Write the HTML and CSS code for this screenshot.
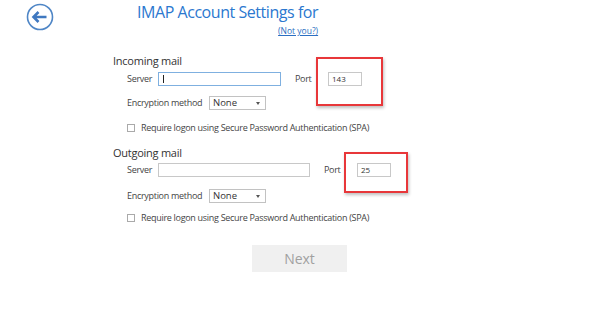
FILE: index.html
```html
<!DOCTYPE html>
<html>
<head>
<meta charset="utf-8">
<link rel="stylesheet" href="styles.css">
</head>
<body>
<div class="page">
  <header class="header">
    <button class="back" aria-label="Back">
      <svg width="28" height="28" viewBox="0 0 28 28">
        <circle cx="14" cy="14" r="12.5" fill="none" stroke="#4f86c6" stroke-width="1.6"/>
        <path d="M7.5 14 H20.5 M12.5 9 L7.5 14 L12.5 19" fill="none" stroke="#3f78c0" stroke-width="2.6" stroke-linecap="butt" stroke-linejoin="miter"/>
      </svg>
    </button>
    <div class="title-block">
      <h1 class="title">IMAP Account Settings for</h1>
      <a class="notyou" href="#">(Not you?)</a>
    </div>
  </header>

  <section class="group group-in">
    <h2 class="group-title">Incoming mail</h2>
    <div class="row row-server">
      <span class="label label-server">Server</span>
      <span class="input input-server focused"><span class="caret"></span></span>
      <span class="label label-port">Port</span>
      <span class="port-wrap">
        <span class="input input-port">143</span>
      </span>
    </div>
    <div class="row row-enc">
      <span class="label label-enc">Encryption method</span>
      <span class="select">None<span class="arrow"></span></span>
    </div>
    <div class="row row-check">
      <span class="checkbox"></span>
      <span class="label">Require logon using Secure Password Authentication (SPA)</span>
    </div>
  </section>

  <section class="group group-out">
    <h2 class="group-title">Outgoing mail</h2>
    <div class="row row-server">
      <span class="label label-server">Server</span>
      <span class="input input-server wide"></span>
      <span class="label label-port">Port</span>
      <span class="port-wrap out">
        <span class="input input-port">25</span>
      </span>
    </div>
    <div class="row row-enc">
      <span class="label label-enc">Encryption method</span>
      <span class="select">None<span class="arrow"></span></span>
    </div>
    <div class="row row-check">
      <span class="checkbox"></span>
      <span class="label">Require logon using Secure Password Authentication (SPA)</span>
    </div>
  </section>

  <div class="actions">
    <button class="next">Next</button>
  </div>
</div>
</body>
</html>
```

FILE: styles.css
```css
* { box-sizing: border-box; }
html, body { margin: 0; padding: 0; background: #fff; }
body {
  width: 600px;
  height: 332px;
  overflow: hidden;
  font-family: "Open Sans", "Noto Sans", "Liberation Sans", sans-serif;
  color: #444;
}
.page { padding: 0; }

.header {
  display: flex;
  align-items: flex-start;
  height: 48px;
}
.back {
  margin: 3px 0 0 26px;
  padding: 0;
  border: 0;
  background: none;
  width: 28px;
  height: 28px;
  display: block;
}
.back svg { display: block; }
.title-block {
  margin-left: 83px;
  margin-top: 0;
  display: flex;
  flex-direction: column;
  align-items: flex-end;
}
.title {
  margin: 0;
  font-weight: 400;
  font-size: 16px;
  line-height: 24px;
  color: #2b78cf;
  letter-spacing: -0.45px;
}
.notyou {
  margin-top: 1px;
  font-size: 8.5px;
  line-height: 12px;
  color: #2b6fc2;
  text-decoration: underline;
}

.group { padding-left: 113px; }
.group-title {
  margin: 0;
  font-weight: 400;
  font-size: 11px;
  line-height: 16px;
  color: #333;
  letter-spacing: -0.25px;
}
.group-in .group-title { margin-top: 5px; }
.group-out .group-title { margin-top: 11px; }

.row {
  display: flex;
  align-items: center;
  padding-left: 14px;
}
.label {
  font-size: 9px;
  line-height: 14px;
  color: #444;
  white-space: nowrap;
  letter-spacing: -0.3px;
}
.row-server { height: 14px; margin-top: 3px; }
.group-out .row-server { margin-top: 2px; }
.label-server { width: 31px; }
.label-port { margin-left: 14px; width: 33px; }

.input {
  height: 14px;
  border: 1px solid #c8c8c8;
  background: #fff;
  font-size: 8px;
  line-height: 12px;
  padding-left: 3px;
  color: #333;
  display: block;
}
.input-server { width: 123px; }
.input-server.wide { width: 152px; }
.focused { border-color: #7fb0e0; position: relative; }
.caret {
  position: absolute;
  left: 4px;
  top: 2px;
  width: 1px;
  height: 8px;
  background: #222;
}
.port-wrap {
  position: relative;
  display: block;
}
.input-port { width: 34px; }
.port-wrap::after {
  content: "";
  position: absolute;
  left: -12px;
  top: -15px;
  width: 63px;
  height: 45px;
  border: 2px solid #e8373a;
  box-shadow: 1px 2px 3px rgba(0,0,0,0.25);
  pointer-events: none;
}
.port-wrap.out::after {
  left: -13px;
  top: -11px;
  width: 60px;
  height: 37px;
}

.row-enc { margin-top: 10px; height: 14px; }
.group-out .row-enc { margin-top: 12px; }
.label-enc { width: 82px; }
.select {
  position: relative;
  width: 57px;
  height: 14px;
  border: 1px solid #c2c2c2;
  font-size: 9.5px;
  line-height: 12px;
  padding-left: 3px;
  color: #333;
}
.arrow {
  position: absolute;
  right: 5px;
  top: 5px;
  width: 0;
  height: 0;
  border-left: 2.5px solid transparent;
  border-right: 2.5px solid transparent;
  border-top: 3px solid #555;
}

.row-check { margin-top: 12px; height: 12px; }
.group-out .row-check { margin-top: 9px; }
.checkbox {
  width: 8px;
  height: 8px;
  border: 1px solid #aaa;
  margin-right: 6px;
  background: #fff;
}

.actions {
  display: flex;
  padding-left: 252px;
  margin-top: 21px;
}
.next {
  width: 95px;
  height: 27px;
  border: 0;
  background: #f0f0f0;
  color: #a0a0a0;
  font-family: "Open Sans", "Noto Sans", sans-serif;
  font-size: 14px;
  padding: 0;
}
```
